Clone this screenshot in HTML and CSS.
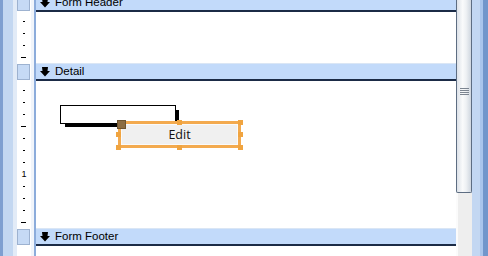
FILE: index.html
```html
<!DOCTYPE html>
<html>
<head>
<meta charset="utf-8">
<link rel="stylesheet" href="styles.css">
</head>
<body>
<div class="window">
  <div class="frame-left"></div>
  <div class="gutter"></div>
  <div class="designer">
    <div class="ruler">
      <div class="rbar rbar-first"><span class="rbox"></span></div>
      <div class="rbody rbody-header">
        <div class="t"><span class="s"></span></div>
        <div class="t"><span class="s"></span></div>
        <div class="t"><span class="s"></span></div>
        <div class="t"><span class="l"></span></div>
      </div>
      <div class="rbar"><span class="rbox"></span></div>
      <div class="rbody rbody-detail">
        <div class="t"><span class="s"></span></div>
        <div class="t"><span class="s"></span></div>
        <div class="t"><span class="s"></span></div>
        <div class="t"><span class="l"></span></div>
        <div class="t"><span class="s"></span></div>
        <div class="t"><span class="s"></span></div>
        <div class="t"><span class="s"></span></div>
        <div class="t"><span class="num">1</span></div>
        <div class="t"><span class="s"></span></div>
        <div class="t"><span class="s"></span></div>
        <div class="t"><span class="s"></span></div>
        <div class="t"><span class="l"></span></div>
      </div>
      <div class="rbar"><span class="rbox"></span></div>
      <div class="rbody rbody-footer"></div>
    </div>
    <div class="sep"></div>
    <div class="canvas">
      <div class="bar bar-first">
        <svg class="arrow" viewBox="0 0 10 10" width="10" height="10"><path d="M2 0 H8 L7.5 4 H10 L5 9.5 L0 4 H2.5 Z"/></svg>
        <span class="label">Form Header</span>
      </div>
      <div class="body body-header"></div>
      <div class="bar">
        <svg class="arrow" viewBox="0 0 10 10" width="10" height="10"><path d="M2 0 H8 L7.5 4 H10 L5 9.5 L0 4 H2.5 Z"/></svg>
        <span class="label">Detail</span>
      </div>
      <div class="body body-detail">
        <div class="textbox"></div>
        <div class="sel">
          <div class="btn">Edit</div>
          <span class="h h-tm"></span>
          <span class="h h-tr"></span>
          <span class="h h-ml"></span>
          <span class="h h-mr"></span>
          <span class="h h-bl"></span>
          <span class="h h-bm"></span>
          <span class="h h-br"></span>
          <span class="move"></span>
        </div>
      </div>
      <div class="bar">
        <svg class="arrow" viewBox="0 0 10 10" width="10" height="10"><path d="M2 0 H8 L7.5 4 H10 L5 9.5 L0 4 H2.5 Z"/></svg>
        <span class="label">Form Footer</span>
      </div>
      <div class="body body-footer"></div>
    </div>
  </div>
  <div class="vscroll">
    <div class="thumb"><span class="grip"></span></div>
    <div class="track"></div>
  </div>
  <div class="frame-right"></div>
</div>
</body>
</html>
```
FILE: styles.css
```css
html, body {
  margin: 0;
  padding: 0;
}
body {
  width: 488px;
  height: 256px;
  overflow: hidden;
  background: #fff;
  font-family: "Liberation Sans", Arial, sans-serif;
}
.window {
  display: flex;
  height: 256px;
  overflow: hidden;
}
.frame-left {
  width: 13px;
  flex: none;
  background: linear-gradient(to right, #7f9fd0 0 3px, #c3d7f1 3px);
}
.gutter {
  width: 4px;
  flex: none;
  background: #e2ebf7;
}
.designer {
  display: flex;
  width: 439px;
  flex: none;
}
.ruler {
  width: 14px;
  flex: none;
  display: flex;
  flex-direction: column;
  background: #fff;
}
.rbar {
  height: 18px;
  flex: none;
  padding-top: 1px;
  box-sizing: border-box;
}
.rbar-first,
.bar-first {
  margin-top: -6px;
}
.rbox {
  display: block;
  width: 13px;
  height: 16px;
  box-sizing: border-box;
  border: 1px solid #9db2d0;
  background: #c6daf5;
}
.rbody {
  display: flex;
  flex-direction: column;
  align-items: center;
  padding-top: 4px;
  box-sizing: border-box;
  overflow: hidden;
}
.rbody-header { height: 51px; }
.rbody-detail { height: 147px; }
.rbody-footer { flex: 1; }
.t {
  height: 12px;
  width: 14px;
  display: flex;
  align-items: center;
  justify-content: center;
}
.s {
  display: block;
  width: 2px;
  height: 1px;
  background: #000;
}
.l {
  display: block;
  width: 5px;
  height: 1px;
  background: #000;
  margin-left: -1px;
}
.num {
  font-size: 9px;
  line-height: 9px;
  color: #000;
}
.sep {
  width: 5px;
  flex: none;
  background: linear-gradient(to right, #f1f5fb 0 3px, #8cacdb 3px);
}
.canvas {
  width: 420px;
  flex: none;
  display: flex;
  flex-direction: column;
}
.bar {
  height: 15px;
  flex: none;
  border-top: 1px solid #dae6f5;
  border-bottom: 2px solid #1b2b46;
  background: #c2dafa;
  display: flex;
  align-items: center;
  gap: 5px;
  padding-left: 4px;
}
.arrow {
  display: block;
  fill: #000;
  flex: none;
}
.label {
  font-size: 11.5px;
  line-height: 15px;
  color: #000;
}
.body {
  background: #fff;
  flex: none;
}
.body-header { height: 51px; }
.body-detail {
  height: 147px;
  position: relative;
}
.body-footer { flex: 1; }
.textbox {
  position: absolute;
  left: 24px;
  top: 24px;
  width: 116px;
  height: 19px;
  box-sizing: border-box;
  border: 1px solid #000;
  background: #fff;
  box-shadow: 4px 4px 0 -1px #000;
}
.sel {
  position: absolute;
  left: 82px;
  top: 40px;
  width: 123px;
  height: 27px;
  box-sizing: border-box;
  border: 3px solid #f3aa4f;
  background: #f0f0f0;
}
.btn {
  height: 100%;
  box-sizing: border-box;
  box-shadow: inset 0 0 0 1px #fafafa;
  display: flex;
  align-items: center;
  justify-content: center;
  font-family: "Open Sans", "Liberation Sans", sans-serif;
  font-size: 12.5px;
  color: #111;
}
.h {
  position: absolute;
  width: 5px;
  height: 5px;
  background: #f0a440;
}
.h-tm { left: 56px; top: -4px; }
.h-tr { right: -5px; top: -4px; }
.h-ml { left: -5px; top: 8px; }
.h-mr { right: -5px; top: 8px; }
.h-bl { left: -5px; bottom: -5px; }
.h-bm { left: 56px; bottom: -5px; }
.h-br { right: -5px; bottom: -5px; }
.move {
  position: absolute;
  left: -4px;
  top: -4px;
  width: 9px;
  height: 9px;
  box-sizing: border-box;
  background: #8c6d43;
  border: 1px solid #6f5530;
}
.vscroll {
  width: 16px;
  flex: none;
  display: flex;
  flex-direction: column;
  background: #efefef;
}
.thumb {
  height: 193px;
  flex: none;
  box-sizing: border-box;
  border: 1px solid #5d6d82;
  border-top: none;
  border-radius: 0 0 2px 2px;
  background: linear-gradient(to right, #dde2e9, #f9fafb 40%, #eef1f4 65%, #cfd6df);
  padding-top: 88px;
  padding-left: 3px;
}
.grip {
  display: block;
  width: 9px;
  height: 7px;
  background: repeating-linear-gradient(to bottom, #7c8591 0 1px, transparent 1px 2px);
}
.track {
  flex: 1;
  background: linear-gradient(to right, #fbfbfb 0 2px, #eeeeee 2px);
}
.frame-right {
  width: 16px;
  flex: none;
  background: linear-gradient(to right, #c3d7f2 0 8px, #aac5ec 8px 11px, #7296cb 11px);
}
```
